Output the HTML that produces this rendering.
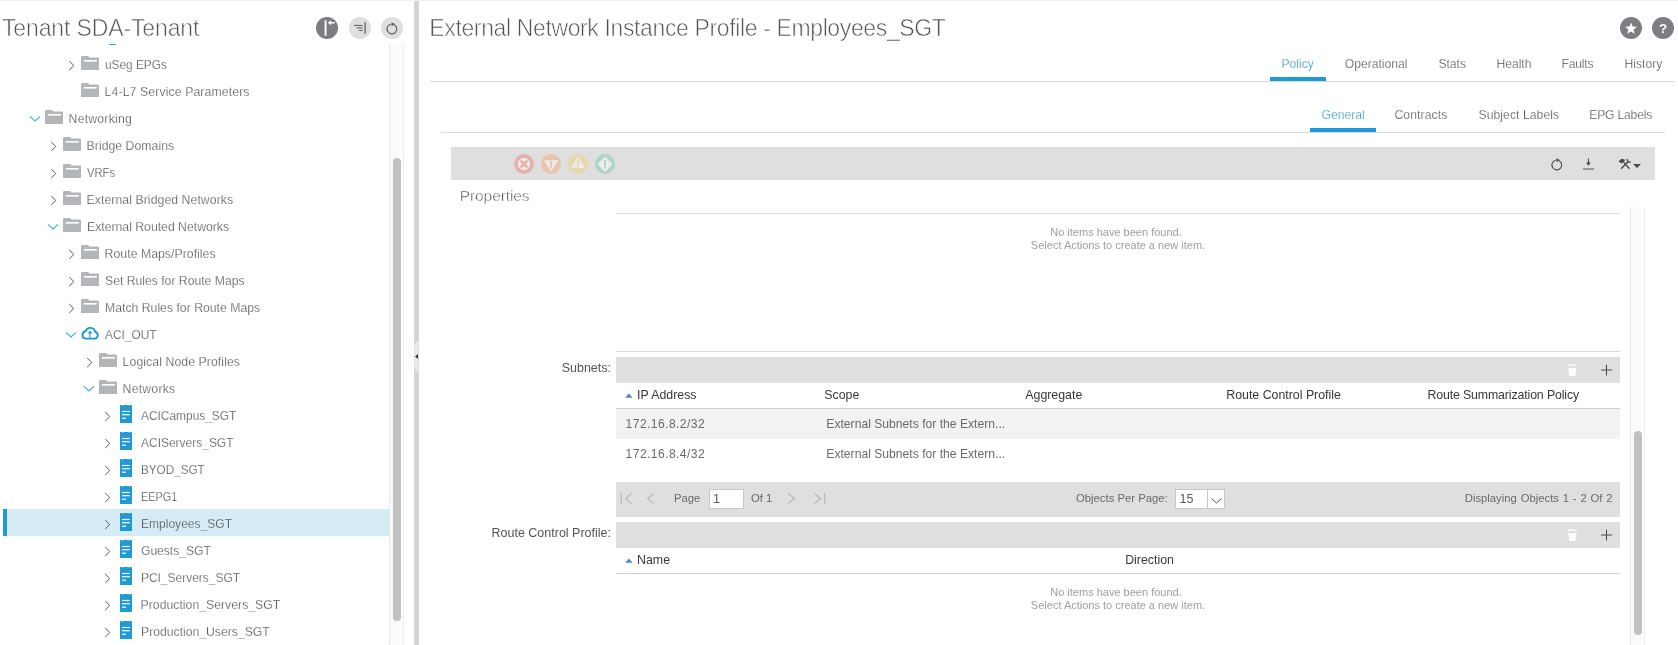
<!DOCTYPE html>
<html><head><meta charset="utf-8"><title>APIC</title>
<style>
*{box-sizing:border-box;margin:0;padding:0}
html,body{width:1678px;height:645px;overflow:hidden;background:#fff}
body{font-family:"Liberation Sans",sans-serif;font-size:12px;color:#58585b;position:relative}
.abs{position:absolute}
#all{position:absolute;left:0;top:0;width:1678px;height:645px;will-change:transform}
svg{display:block;overflow:visible}
#topline{left:0;top:0;width:1678px;height:1px;background:#f0f0f0}
#ltitle{left:2.0px;top:13.5px;font-size:23px;line-height:28px;color:#525255;-webkit-text-stroke:0.6px #fff;white-space:nowrap;letter-spacing:-0.13px}
#tree{left:0;top:50px;width:389px;height:595px;overflow:hidden}
.row{position:absolute;left:3px;width:386px;height:27px;line-height:31px;white-space:nowrap;font-size:12.25px}
.row.sel{background:#d5ebf5;border-left:4px solid #1e9ad6}
.row span{position:absolute;top:0;color:#48484b;-webkit-text-stroke:0.25px #fff}
.row.sel span{-webkit-text-stroke:0.25px #d5ebf5}
.row svg{position:absolute}
#lscroll{left:389px;top:44px;width:15px;height:601px;background:linear-gradient(to right,#f9f9f9,#fcfcfc);border-left:1px solid #e8e8e8;border-right:1px solid #eeeeee}
#lthumb{left:393px;top:158px;width:8px;height:463px;background:#c1c1c1;border-radius:4px}
#split{left:414px;top:1px;width:5px;height:644px;background:#d6d5d3}
#rtitle{left:429.3px;top:13.5px;font-size:23px;line-height:28px;color:#525255;-webkit-text-stroke:0.6px #fff;white-space:nowrap;letter-spacing:-0.37px}
.tab{position:absolute;white-space:nowrap;font-size:12.15px;line-height:16px;color:#48484b;-webkit-text-stroke:0.25px #fff}
.tab.on{color:#1b94d2}
.hl{position:absolute;height:1px;background:#dadada}
.ul{position:absolute;height:4px;background:#1e9ad6}
.bar{position:absolute;background:#dfdfdf}
.hdr{position:absolute;font-size:12.35px;line-height:16px;color:#38383b;white-space:nowrap}
.cell{position:absolute;font-size:12.15px;line-height:16px;color:#6a6a6d;white-space:nowrap}
.empty{position:absolute;font-size:11px;line-height:13px;color:#9e9e9e;text-align:center;white-space:nowrap}
.lbl{position:absolute;font-size:12.5px;line-height:16px;color:#545457;white-space:nowrap;text-align:right}
.pg{position:absolute;font-size:11.3px;line-height:16px;color:#6a6a6d;white-space:nowrap}
.inp{position:absolute;background:#fff;border:1px solid #c6c6ce;font-size:13px;line-height:19px;color:#58585b}
</style></head><body><div id="all">
<div id="topline" class="abs"></div>
<div id="ltitle" class="abs">Tenant SDA-Tenant</div>

<svg class="abs" style="left:316px;top:17px" width="22" height="22" viewBox="0 0 22 22"><circle cx="11" cy="11" r="11" fill="#7c7c81"/><rect x="8.6" y="3.4" width="1.9" height="15.2" fill="#fff"/><path d="M11.9 5.7L15 3.2V4.9H18.6V6.5H15V8.2Z" fill="#fff"/></svg>
<svg class="abs" style="left:349px;top:17px" width="22" height="22" viewBox="0 0 22 22"><circle cx="11" cy="11" r="11" fill="#dfdfdf"/><path d="M5.2 8.4H13.6M7.6 10.9H13.6M10 13.4H13.6" stroke="#58585b" stroke-width="1" fill="none"/><path d="M16.1 5V16.8" stroke="#58585b" stroke-width="1.2" fill="none"/></svg>
<svg class="abs" style="left:381px;top:17px" width="22" height="22" viewBox="0 0 22 22"><circle cx="11" cy="11" r="11" fill="#dfdfdf"/><path d="M12.7 7.4A4.9 4.9 0 1 1 9.7 7.2" stroke="#58585b" stroke-width="1.1" fill="none"/><path d="M10.4 5.2L14 7.1L10.6 8.9Z" fill="#58585b"/></svg>
<div class="abs" style="left:109px;top:44px;width:7px;height:1px;background:#29a5dc"></div>

<div id="tree" class="abs">
<div class="row" style="top:0px"><svg style="left:65px;top:10px" width="7" height="11" viewBox="0 0 7 11"><path d="M1.2 1L5.8 5.5L1.2 10" fill="none" stroke="#5a5a5e" stroke-width="1"/></svg><svg style="left:78px;top:6px" width="18" height="14" viewBox="0 0 18 14"><path d="M0 1.2Q0 0 1.2 0H7.2L8.4 1.6H17Q18 1.6 18 2.6V14H0Z" fill="#b3b6b9"/><rect x="2.8" y="4" width="13" height="1.6" fill="#fff"/></svg><span style="left:101.6px;transform:scaleX(0.9666);transform-origin:0 50%">uSeg EPGs</span></div>
<div class="row" style="top:27px"><svg style="left:78px;top:6px" width="18" height="14" viewBox="0 0 18 14"><path d="M0 1.2Q0 0 1.2 0H7.2L8.4 1.6H17Q18 1.6 18 2.6V14H0Z" fill="#b3b6b9"/><rect x="2.8" y="4" width="13" height="1.6" fill="#fff"/></svg><span style="left:101.6px;letter-spacing:0.113px">L4-L7 Service Parameters</span></div>
<div class="row" style="top:54px"><svg style="left:26px;top:12px" width="12" height="7" viewBox="0 0 12 7"><path d="M1 0.4L6 5L11 0.4" fill="none" stroke="#35abe0" stroke-width="1.05"/></svg><svg style="left:42px;top:6px" width="18" height="14" viewBox="0 0 18 14"><path d="M0 1.2Q0 0 1.2 0H7.2L8.4 1.6H17Q18 1.6 18 2.6V14H0Z" fill="#b3b6b9"/><rect x="2.8" y="4" width="13" height="1.6" fill="#fff"/></svg><span style="left:65.6px;letter-spacing:0.211px">Networking</span></div>
<div class="row" style="top:81px"><svg style="left:47px;top:10px" width="7" height="11" viewBox="0 0 7 11"><path d="M1.2 1L5.8 5.5L1.2 10" fill="none" stroke="#5a5a5e" stroke-width="1"/></svg><svg style="left:60px;top:6px" width="18" height="14" viewBox="0 0 18 14"><path d="M0 1.2Q0 0 1.2 0H7.2L8.4 1.6H17Q18 1.6 18 2.6V14H0Z" fill="#b3b6b9"/><rect x="2.8" y="4" width="13" height="1.6" fill="#fff"/></svg><span style="left:83.6px;letter-spacing:0.031px">Bridge Domains</span></div>
<div class="row" style="top:108px"><svg style="left:47px;top:10px" width="7" height="11" viewBox="0 0 7 11"><path d="M1.2 1L5.8 5.5L1.2 10" fill="none" stroke="#5a5a5e" stroke-width="1"/></svg><svg style="left:60px;top:6px" width="18" height="14" viewBox="0 0 18 14"><path d="M0 1.2Q0 0 1.2 0H7.2L8.4 1.6H17Q18 1.6 18 2.6V14H0Z" fill="#b3b6b9"/><rect x="2.8" y="4" width="13" height="1.6" fill="#fff"/></svg><span style="left:83.6px;transform:scaleX(0.9164);transform-origin:0 50%">VRFs</span></div>
<div class="row" style="top:135px"><svg style="left:47px;top:10px" width="7" height="11" viewBox="0 0 7 11"><path d="M1.2 1L5.8 5.5L1.2 10" fill="none" stroke="#5a5a5e" stroke-width="1"/></svg><svg style="left:60px;top:6px" width="18" height="14" viewBox="0 0 18 14"><path d="M0 1.2Q0 0 1.2 0H7.2L8.4 1.6H17Q18 1.6 18 2.6V14H0Z" fill="#b3b6b9"/><rect x="2.8" y="4" width="13" height="1.6" fill="#fff"/></svg><span style="left:83.6px;letter-spacing:0.062px">External Bridged Networks</span></div>
<div class="row" style="top:162px"><svg style="left:44px;top:12px" width="12" height="7" viewBox="0 0 12 7"><path d="M1 0.4L6 5L11 0.4" fill="none" stroke="#35abe0" stroke-width="1.05"/></svg><svg style="left:60px;top:6px" width="18" height="14" viewBox="0 0 18 14"><path d="M0 1.2Q0 0 1.2 0H7.2L8.4 1.6H17Q18 1.6 18 2.6V14H0Z" fill="#b3b6b9"/><rect x="2.8" y="4" width="13" height="1.6" fill="#fff"/></svg><span style="left:83.6px;transform:scaleX(0.9986);transform-origin:0 50%">External Routed Networks</span></div>
<div class="row" style="top:189px"><svg style="left:65px;top:10px" width="7" height="11" viewBox="0 0 7 11"><path d="M1.2 1L5.8 5.5L1.2 10" fill="none" stroke="#5a5a5e" stroke-width="1"/></svg><svg style="left:78px;top:6px" width="18" height="14" viewBox="0 0 18 14"><path d="M0 1.2Q0 0 1.2 0H7.2L8.4 1.6H17Q18 1.6 18 2.6V14H0Z" fill="#b3b6b9"/><rect x="2.8" y="4" width="13" height="1.6" fill="#fff"/></svg><span style="left:101.6px;letter-spacing:0.039px">Route Maps/Profiles</span></div>
<div class="row" style="top:216px"><svg style="left:65px;top:10px" width="7" height="11" viewBox="0 0 7 11"><path d="M1.2 1L5.8 5.5L1.2 10" fill="none" stroke="#5a5a5e" stroke-width="1"/></svg><svg style="left:78px;top:6px" width="18" height="14" viewBox="0 0 18 14"><path d="M0 1.2Q0 0 1.2 0H7.2L8.4 1.6H17Q18 1.6 18 2.6V14H0Z" fill="#b3b6b9"/><rect x="2.8" y="4" width="13" height="1.6" fill="#fff"/></svg><span style="left:101.6px;transform:scaleX(0.995);transform-origin:0 50%">Set Rules for Route Maps</span></div>
<div class="row" style="top:243px"><svg style="left:65px;top:10px" width="7" height="11" viewBox="0 0 7 11"><path d="M1.2 1L5.8 5.5L1.2 10" fill="none" stroke="#5a5a5e" stroke-width="1"/></svg><svg style="left:78px;top:6px" width="18" height="14" viewBox="0 0 18 14"><path d="M0 1.2Q0 0 1.2 0H7.2L8.4 1.6H17Q18 1.6 18 2.6V14H0Z" fill="#b3b6b9"/><rect x="2.8" y="4" width="13" height="1.6" fill="#fff"/></svg><span style="left:101.6px;transform:scaleX(0.9994);transform-origin:0 50%">Match Rules for Route Maps</span></div>
<div class="row" style="top:270px"><svg style="left:62px;top:12px" width="12" height="7" viewBox="0 0 12 7"><path d="M1 0.4L6 5L11 0.4" fill="none" stroke="#35abe0" stroke-width="1.05"/></svg><svg style="left:78px;top:6px" width="18" height="14" viewBox="0 0 18 14"><path d="M4.6 12.6H13.6A3.4 3.4 0 0 0 14.2 5.9A5 5 0 0 0 4.6 5.2A3.75 3.75 0 0 0 4.6 12.6Z" fill="none" stroke="#1e9ad6" stroke-width="1.9"/><path d="M9 12V6" fill="none" stroke="#6bbce6" stroke-width="1.6"/><path d="M6.6 7.6L9 4.6L11.4 7.6Z" fill="#1e9ad6"/></svg><span style="left:101.6px;transform:scaleX(0.9698);transform-origin:0 50%">ACI_OUT</span></div>
<div class="row" style="top:297px"><svg style="left:83px;top:10px" width="7" height="11" viewBox="0 0 7 11"><path d="M1.2 1L5.8 5.5L1.2 10" fill="none" stroke="#5a5a5e" stroke-width="1"/></svg><svg style="left:96px;top:6px" width="18" height="14" viewBox="0 0 18 14"><path d="M0 1.2Q0 0 1.2 0H7.2L8.4 1.6H17Q18 1.6 18 2.6V14H0Z" fill="#b3b6b9"/><rect x="2.8" y="4" width="13" height="1.6" fill="#fff"/></svg><span style="left:119.6px;letter-spacing:0.08px">Logical Node Profiles</span></div>
<div class="row" style="top:324px"><svg style="left:80px;top:12px" width="12" height="7" viewBox="0 0 12 7"><path d="M1 0.4L6 5L11 0.4" fill="none" stroke="#35abe0" stroke-width="1.05"/></svg><svg style="left:96px;top:6px" width="18" height="14" viewBox="0 0 18 14"><path d="M0 1.2Q0 0 1.2 0H7.2L8.4 1.6H17Q18 1.6 18 2.6V14H0Z" fill="#b3b6b9"/><rect x="2.8" y="4" width="13" height="1.6" fill="#fff"/></svg><span style="left:119.6px;letter-spacing:0.214px">Networks</span></div>
<div class="row" style="top:351px"><svg style="left:101px;top:10px" width="7" height="11" viewBox="0 0 7 11"><path d="M1.2 1L5.8 5.5L1.2 10" fill="none" stroke="#5a5a5e" stroke-width="1"/></svg><svg style="left:117px;top:4px" width="12" height="18" viewBox="0 0 12 18"><path d="M0 0H2L2.7 1.1L3.4 0H8.6L9.3 1.1L10 0H12V18H0Z" fill="#1e9ad6"/><rect x="2" y="5.9" width="7.8" height="1.2" fill="#fff"/><rect x="2" y="9.1" width="7.8" height="1.2" fill="#fff"/><rect x="2" y="12.6" width="4" height="1.2" fill="#fff"/></svg><span style="left:137.6px;transform:scaleX(0.9724);transform-origin:0 50%">ACICampus_SGT</span></div>
<div class="row" style="top:378px"><svg style="left:101px;top:10px" width="7" height="11" viewBox="0 0 7 11"><path d="M1.2 1L5.8 5.5L1.2 10" fill="none" stroke="#5a5a5e" stroke-width="1"/></svg><svg style="left:117px;top:4px" width="12" height="18" viewBox="0 0 12 18"><path d="M0 0H2L2.7 1.1L3.4 0H8.6L9.3 1.1L10 0H12V18H0Z" fill="#1e9ad6"/><rect x="2" y="5.9" width="7.8" height="1.2" fill="#fff"/><rect x="2" y="9.1" width="7.8" height="1.2" fill="#fff"/><rect x="2" y="12.6" width="4" height="1.2" fill="#fff"/></svg><span style="left:137.6px;transform:scaleX(0.9776);transform-origin:0 50%">ACIServers_SGT</span></div>
<div class="row" style="top:405px"><svg style="left:101px;top:10px" width="7" height="11" viewBox="0 0 7 11"><path d="M1.2 1L5.8 5.5L1.2 10" fill="none" stroke="#5a5a5e" stroke-width="1"/></svg><svg style="left:117px;top:4px" width="12" height="18" viewBox="0 0 12 18"><path d="M0 0H2L2.7 1.1L3.4 0H8.6L9.3 1.1L10 0H12V18H0Z" fill="#1e9ad6"/><rect x="2" y="5.9" width="7.8" height="1.2" fill="#fff"/><rect x="2" y="9.1" width="7.8" height="1.2" fill="#fff"/><rect x="2" y="12.6" width="4" height="1.2" fill="#fff"/></svg><span style="left:137.6px;transform:scaleX(0.956);transform-origin:0 50%">BYOD_SGT</span></div>
<div class="row" style="top:432px"><svg style="left:101px;top:10px" width="7" height="11" viewBox="0 0 7 11"><path d="M1.2 1L5.8 5.5L1.2 10" fill="none" stroke="#5a5a5e" stroke-width="1"/></svg><svg style="left:117px;top:4px" width="12" height="18" viewBox="0 0 12 18"><path d="M0 0H2L2.7 1.1L3.4 0H8.6L9.3 1.1L10 0H12V18H0Z" fill="#1e9ad6"/><rect x="2" y="5.9" width="7.8" height="1.2" fill="#fff"/><rect x="2" y="9.1" width="7.8" height="1.2" fill="#fff"/><rect x="2" y="12.6" width="4" height="1.2" fill="#fff"/></svg><span style="left:137.6px;transform:scaleX(0.8872);transform-origin:0 50%">EEPG1</span></div>
<div class="row sel" style="top:459px"><svg style="left:97px;top:10px" width="7" height="11" viewBox="0 0 7 11"><path d="M1.2 1L5.8 5.5L1.2 10" fill="none" stroke="#5a5a5e" stroke-width="1"/></svg><svg style="left:113px;top:4px" width="12" height="18" viewBox="0 0 12 18"><path d="M0 0H2L2.7 1.1L3.4 0H8.6L9.3 1.1L10 0H12V18H0Z" fill="#1e9ad6"/><rect x="2" y="5.9" width="7.8" height="1.2" fill="#fff"/><rect x="2" y="9.1" width="7.8" height="1.2" fill="#fff"/><rect x="2" y="12.6" width="4" height="1.2" fill="#fff"/></svg><span style="left:133.6px;transform:scaleX(0.9826);transform-origin:0 50%">Employees_SGT</span></div>
<div class="row" style="top:486px"><svg style="left:101px;top:10px" width="7" height="11" viewBox="0 0 7 11"><path d="M1.2 1L5.8 5.5L1.2 10" fill="none" stroke="#5a5a5e" stroke-width="1"/></svg><svg style="left:117px;top:4px" width="12" height="18" viewBox="0 0 12 18"><path d="M0 0H2L2.7 1.1L3.4 0H8.6L9.3 1.1L10 0H12V18H0Z" fill="#1e9ad6"/><rect x="2" y="5.9" width="7.8" height="1.2" fill="#fff"/><rect x="2" y="9.1" width="7.8" height="1.2" fill="#fff"/><rect x="2" y="12.6" width="4" height="1.2" fill="#fff"/></svg><span style="left:137.6px;transform:scaleX(0.9857);transform-origin:0 50%">Guests_SGT</span></div>
<div class="row" style="top:513px"><svg style="left:101px;top:10px" width="7" height="11" viewBox="0 0 7 11"><path d="M1.2 1L5.8 5.5L1.2 10" fill="none" stroke="#5a5a5e" stroke-width="1"/></svg><svg style="left:117px;top:4px" width="12" height="18" viewBox="0 0 12 18"><path d="M0 0H2L2.7 1.1L3.4 0H8.6L9.3 1.1L10 0H12V18H0Z" fill="#1e9ad6"/><rect x="2" y="5.9" width="7.8" height="1.2" fill="#fff"/><rect x="2" y="9.1" width="7.8" height="1.2" fill="#fff"/><rect x="2" y="12.6" width="4" height="1.2" fill="#fff"/></svg><span style="left:137.6px;transform:scaleX(0.9762);transform-origin:0 50%">PCI_Servers_SGT</span></div>
<div class="row" style="top:540px"><svg style="left:101px;top:10px" width="7" height="11" viewBox="0 0 7 11"><path d="M1.2 1L5.8 5.5L1.2 10" fill="none" stroke="#5a5a5e" stroke-width="1"/></svg><svg style="left:117px;top:4px" width="12" height="18" viewBox="0 0 12 18"><path d="M0 0H2L2.7 1.1L3.4 0H8.6L9.3 1.1L10 0H12V18H0Z" fill="#1e9ad6"/><rect x="2" y="5.9" width="7.8" height="1.2" fill="#fff"/><rect x="2" y="9.1" width="7.8" height="1.2" fill="#fff"/><rect x="2" y="12.6" width="4" height="1.2" fill="#fff"/></svg><span style="left:137.6px;letter-spacing:0.005px">Production_Servers_SGT</span></div>
<div class="row" style="top:567px"><svg style="left:101px;top:10px" width="7" height="11" viewBox="0 0 7 11"><path d="M1.2 1L5.8 5.5L1.2 10" fill="none" stroke="#5a5a5e" stroke-width="1"/></svg><svg style="left:117px;top:4px" width="12" height="18" viewBox="0 0 12 18"><path d="M0 0H2L2.7 1.1L3.4 0H8.6L9.3 1.1L10 0H12V18H0Z" fill="#1e9ad6"/><rect x="2" y="5.9" width="7.8" height="1.2" fill="#fff"/><rect x="2" y="9.1" width="7.8" height="1.2" fill="#fff"/><rect x="2" y="12.6" width="4" height="1.2" fill="#fff"/></svg><span style="left:137.6px;transform:scaleX(0.9953);transform-origin:0 50%">Production_Users_SGT</span></div>
</div>
<div id="lscroll" class="abs"></div>
<div id="lthumb" class="abs"></div>
<div id="split" class="abs"></div>
<svg class="abs" style="left:414px;top:341px" width="5" height="31" viewBox="0 0 5 31"><path d="M0.6 3.4L4.4 -0.4V31.4L0.6 27.6Z" fill="#ececec"/><path d="M1 15.5L4 13V18Z" fill="#333"/></svg>
<div id="rtitle" class="abs">External Network Instance Profile - Employees_SGT</div>

<svg class="abs" style="left:1620px;top:17px" width="22" height="22" viewBox="0 0 22 22"><circle cx="11" cy="11" r="11" fill="#7d7e84"/><path d="M11.00 5.40L12.59 9.52L16.99 9.75L13.57 12.53L14.70 16.80L11.00 14.40L7.30 16.80L8.43 12.53L5.01 9.75L9.41 9.52Z" fill="#fff"/></svg>
<div class="abs" style="left:1652px;top:17px;width:22px;height:22px;border-radius:11px;background:#7d7e84;color:#fff;font-weight:bold;font-size:13.5px;line-height:23px;text-align:center">?</div>

<div class="tab on" style="left:1281.4px;top:56px;letter-spacing:0px">Policy</div>
<div class="tab" style="left:1344.7px;top:56px;letter-spacing:0px">Operational</div>
<div class="tab" style="left:1438.4px;top:56px;letter-spacing:0px">Stats</div>
<div class="tab" style="left:1496.4px;top:56px;letter-spacing:0px">Health</div>
<div class="tab" style="left:1561.4px;top:56px;letter-spacing:-0.17px">Faults</div>
<div class="tab" style="left:1624.5px;top:56px;letter-spacing:0px">History</div>
<div class="ul" style="left:1270px;top:77px;width:56px"></div>
<div class="hl" style="left:430px;top:81px;width:1245px"></div>
<div class="tab on" style="left:1321.5px;top:107px;letter-spacing:0px">General</div>
<div class="tab" style="left:1394.5px;top:107px;letter-spacing:0.1px">Contracts</div>
<div class="tab" style="left:1478.5px;top:107px;letter-spacing:0.07px">Subject Labels</div>
<div class="tab" style="left:1589.3px;top:107px;letter-spacing:-0.2px">EPG Labels</div>
<div class="ul" style="left:1310px;top:128px;width:66px"></div>
<div class="hl" style="left:441px;top:132px;width:1224px"></div>

<div class="bar" style="left:451px;top:147px;width:1204px;height:33px"></div>
<svg class="abs" style="left:514px;top:154px" width="20" height="20" viewBox="0 0 20 20"><circle cx="10" cy="10" r="10" fill="#e7b0ae"/><circle cx="10" cy="10" r="6.2" fill="#ebe6e6"/><path d="M6.7 6.7L13.3 13.3M13.3 6.7L6.7 13.3" stroke="#e7b0ae" stroke-width="2.5"/></svg>
<svg class="abs" style="left:541px;top:154px" width="20" height="20" viewBox="0 0 20 20"><circle cx="10" cy="10" r="10" fill="#eac4ad"/><path d="M2.9 6.2H17.3L10.1 17.4Z" fill="#ececec"/><rect x="9" y="7.3" width="2" height="4.3" fill="#eac4ad"/><rect x="9" y="12.4" width="2" height="1.8" fill="#eac4ad"/></svg>
<svg class="abs" style="left:568px;top:154px" width="20" height="20" viewBox="0 0 20 20"><circle cx="10" cy="10" r="10" fill="#e8d8ad"/><path d="M10 2.8L17.1 13.8H2.9Z" fill="#ececec"/><rect x="9" y="5.6" width="2" height="4.6" fill="#e8d8ad"/><rect x="9" y="11.1" width="2" height="1.7" fill="#e8d8ad"/></svg>
<svg class="abs" style="left:595px;top:154px" width="20" height="20" viewBox="0 0 20 20"><circle cx="10" cy="10" r="10" fill="#add4cb"/><path d="M10 2.6L17.6 10.3L10 18L2.4 10.3Z" fill="#ececec"/><rect x="9" y="5.9" width="2" height="5.7" fill="#add4cb"/><rect x="9" y="12.4" width="2" height="1.7" fill="#add4cb"/></svg>
<svg class="abs" style="left:1549px;top:155.5px" width="16" height="16" viewBox="0 0 16 16"><path d="M9.6 4.4A4.9 4.9 0 1 1 6.6 4.2" stroke="#4a4a4d" stroke-width="1.1" fill="none"/><path d="M7.3 2.2L10.9 4.1L7.5 5.9Z" fill="#4a4a4d"/></svg>
<svg class="abs" style="left:1582px;top:157px" width="13" height="13" viewBox="0 0 13 13"><path d="M6.45 1.4V7" stroke="#4a4a4d" stroke-width="1.1"/><path d="M4 5.5H8.9L6.45 8.7Z" fill="#4a4a4d"/><rect x="0.9" y="11.2" width="11.1" height="1.7" fill="#8c8c90"/></svg>
<svg class="abs" style="left:1618px;top:158px" width="24" height="12" viewBox="0 0 24 12"><path d="M3 10.8L10.6 3.2M4.4 2.6L11.4 10.8" stroke="#4a4a4d" stroke-width="1.4" fill="none"/><path d="M0.6 3.2L3.6 0.8L6.6 1.4L7 2.4L3.4 5.4Z" fill="#4a4a4d"/><path d="M9.2 1A2.6 2.6 0 0 0 12.6 4" stroke="#4a4a4d" stroke-width="1.4" fill="none"/><path d="M15 6.1H23L19 10Z" fill="#4a4a4d"/></svg>
<div class="abs" style="left:459.8px;top:186px;font-size:15.5px;line-height:20px;color:#58585b;-webkit-text-stroke:0.4px #fff;letter-spacing:-0.1px;white-space:nowrap">Properties</div>

<div class="abs" style="left:1630px;top:207px;width:15px;height:438px;background:linear-gradient(to right,#f9f9f9,#fcfcfc);border-left:1px solid #e8e8e8;border-right:1px solid #eeeeee"></div>
<div class="abs" style="left:1634px;top:431px;width:8px;height:204px;background:#c1c1c1;border-radius:4px"></div>
<div class="hl" style="left:616px;top:213px;width:1004px"></div>
<div class="empty" style="left:614px;top:226px;width:1004px">No items have been found.</div><div class="empty" style="left:616px;top:239px;width:1004px">Select Actions to create a new item.</div>
<div class="hl" style="left:616px;top:351px;width:1004px"></div>
<div class="lbl" style="left:440px;width:171px;top:360px">Subnets:</div>
<div class="bar" style="left:616px;top:357px;width:1004px;height:26px"></div>
<svg class="abs" style="left:1567px;top:364px" width="10" height="13" viewBox="0 0 10 13"><path d="M0.9 0.3Q5 -0.4 9.6 1.3L9.4 2.7Q5 1.1 0.8 1.7Z" fill="#fcfcfc"/><path d="M1.2 4H9.5L8.5 12H2.3Z" fill="#fcfcfc"/></svg>
<svg class="abs" style="left:1601px;top:364px" width="12" height="12" viewBox="0 0 12 12"><path d="M5.5 0.7V11.4M0 5.95H11.2" stroke="#4a4a4d" stroke-width="1.05"/></svg>
<svg class="abs" style="left:624.5px;top:393px" width="8" height="5" viewBox="0 0 8 5"><path d="M0.2 4.8L3.9 0.4L7.6 4.8Z" fill="#4e86c6"/></svg>
<div class="hdr" style="left:637.0px;top:387px">IP Address</div>
<div class="hdr" style="left:824.3px;top:387px">Scope</div>
<div class="hdr" style="left:1025.3px;top:387px">Aggregate</div>
<div class="hdr" style="left:1226.3px;top:387px">Route Control Profile</div>
<div class="hdr" style="left:1427.4px;top:387px;letter-spacing:-0.13px">Route Summarization Policy</div>
<div class="hl" style="left:616px;top:408px;width:1004px;background:#d0d0d0"></div>
<div class="abs" style="left:616px;top:409px;width:1004px;height:30px;background:#f2f2f2"></div>
<div class="cell" style="left:625.6px;top:416px;letter-spacing:0.4px">172.16.8.2/32</div>
<div class="cell" style="left:826.3px;top:416px">External Subnets for the Extern...</div>
<div class="cell" style="left:625.6px;top:446px;letter-spacing:0.4px">172.16.8.4/32</div>
<div class="cell" style="left:826.3px;top:446px">External Subnets for the Extern...</div>
<div class="bar" style="left:616px;top:482px;width:1004px;height:35px"></div>
<svg class="abs" style="left:620px;top:493px" width="13" height="11" viewBox="0 0 13 11"><path d="M1.2 0V11M11.6 0.4L5.6 5.5L11.6 10.6" stroke="#b4b4b8" stroke-width="1.1" fill="none"/></svg>
<svg class="abs" style="left:646px;top:493px" width="9" height="11" viewBox="0 0 9 11"><path d="M8 0.4L1.6 5.5L8 10.6" stroke="#b4b4b8" stroke-width="1.1" fill="none"/></svg>
<div class="pg" style="left:674px;top:490px">Page</div>
<div class="inp" style="left:709px;top:489px;width:35px;height:20px;padding-left:3px;font-size:12.5px">1</div>
<div class="pg" style="left:751px;top:490px">Of 1</div>
<svg class="abs" style="left:787px;top:493px" width="9" height="11" viewBox="0 0 9 11"><path d="M1 0.4L7.4 5.5L1 10.6" stroke="#b4b4b8" stroke-width="1.1" fill="none"/></svg>
<svg class="abs" style="left:813px;top:493px" width="13" height="11" viewBox="0 0 13 11"><path d="M11.8 0V11M1.4 0.4L7.4 5.5L1.4 10.6" stroke="#b4b4b8" stroke-width="1.1" fill="none"/></svg>
<div class="pg" style="left:1076px;top:490px">Objects Per Page:</div>
<div class="inp" style="left:1175px;top:489px;width:50px;height:20px;padding-left:3.5px;font-size:12.5px">15</div>
<div class="abs" style="left:1207px;top:489px;width:1px;height:20px;background:#c6c6ce"></div>
<svg class="abs" style="left:1211px;top:498px" width="11" height="6" viewBox="0 0 11 6"><path d="M0.5 0.5L5.5 5L10.5 0.5" stroke="#58585b" stroke-width="1" fill="none"/></svg>
<div class="pg" style="left:1300px;width:312.6px;text-align:right;top:490px;word-spacing:0.68px">Displaying Objects 1 - 2 Of 2</div>
<div class="lbl" style="left:440px;width:171px;top:525px">Route Control Profile:</div>
<div class="bar" style="left:616px;top:522px;width:1004px;height:26px"></div>
<svg class="abs" style="left:1567px;top:529px" width="10" height="13" viewBox="0 0 10 13"><path d="M0.9 0.3Q5 -0.4 9.6 1.3L9.4 2.7Q5 1.1 0.8 1.7Z" fill="#fcfcfc"/><path d="M1.2 4H9.5L8.5 12H2.3Z" fill="#fcfcfc"/></svg>
<svg class="abs" style="left:1601px;top:529px" width="12" height="12" viewBox="0 0 12 12"><path d="M5.5 0.7V11.4M0 5.95H11.2" stroke="#4a4a4d" stroke-width="1.05"/></svg>
<svg class="abs" style="left:624.5px;top:558px" width="8" height="5" viewBox="0 0 8 5"><path d="M0.2 4.8L3.9 0.4L7.6 4.8Z" fill="#4e86c6"/></svg>
<div class="hdr" style="left:637.1px;top:552px">Name</div>
<div class="hdr" style="left:1125.2px;top:552px">Direction</div>
<div class="hl" style="left:616px;top:573px;width:1004px;background:#d0d0d0"></div>
<div class="empty" style="left:614px;top:586px;width:1004px">No items have been found.</div><div class="empty" style="left:616px;top:599px;width:1004px">Select Actions to create a new item.</div>
</div></body></html>
